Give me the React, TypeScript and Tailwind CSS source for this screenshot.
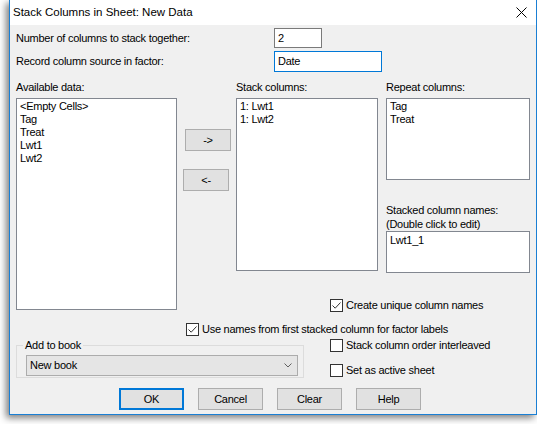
import React from 'react';

/* ── Small Win32-style building blocks ───────────────────────── */
const CheckBox: React.FC<{ checked?: boolean }> = ({ checked }) => (
  <span className="w-[13px] h-[13px] border border-[#333333] bg-white flex items-center justify-center shrink-0">
    {checked && (
      <svg width="11" height="11" viewBox="0 0 11 11">
        <path d="M1.5 5.5 L4.2 8.2 L9.5 2.5" fill="none" stroke="#333333" strokeWidth="1" />
      </svg>
    )}
  </span>
);

const CheckRow: React.FC<{ checked?: boolean; label: string; className?: string }> = ({
  checked,
  label,
  className = '',
}) => (
  <label className={`flex items-center gap-[3px] h-[13px] leading-[13px] ${className}`}>
    <CheckBox checked={checked} />
    <span>{label}</span>
  </label>
);

const Button: React.FC<{ label: string; primary?: boolean; className?: string }> = ({
  label,
  primary,
  className = '',
}) => (
  <button
    className={`h-[22px] bg-[#e1e1e1] text-black flex items-center justify-center ${
      primary ? 'border-2 border-[#0078d7]' : 'border border-[#adadad]'
    } ${className}`}
  >
    {label}
  </button>
);

const ListBox: React.FC<{ items: string[]; className?: string }> = ({ items, className = '' }) => (
  <ul className={`bg-white border border-[#828790] pt-[1px] pl-[3px] ${className}`}>
    {items.map((it) => (
      <li key={it} className="leading-[13px] whitespace-nowrap">
        {it}
      </li>
    ))}
  </ul>
);

/* ── Dialog ─────────────────────────────────────────────────── */
export default function App() {
  return (
    <div className="w-[537px] h-[424px] bg-white overflow-hidden font-['Liberation_Sans',Arial,sans-serif] text-[11px] text-black">
      <div className="ml-[9px] w-[528px] h-[415px] bg-[#f0f0f0] border-x border-b border-[#1a7fd4] flex flex-col shadow-[-3px_3px_7px_rgba(0,0,0,0.5)]">
        {/* Title bar */}
        <div className="h-[25px] bg-white flex items-center justify-between pl-[3px] pr-[9px] shrink-0">
          <span className="text-[11.5px]">Stack Columns in Sheet: New Data</span>
          <svg width="11" height="11" viewBox="0 0 11 11">
            <path d="M0.5 0.5 L10.5 10.5 M10.5 0.5 L0.5 10.5" stroke="#000" strokeWidth="1" />
          </svg>
        </div>

        {/* Body */}
        <div className="flex flex-col pl-[6px] tracking-[-0.25px]">
          <div className="flex items-center mt-[3px] h-[20px]">
            <span className="w-[258px]">Number of columns to stack together:</span>
            <div className="w-[48px] h-[20px] border border-[#7a7a7a] bg-white pl-[3px] flex items-center">2</div>
          </div>
          <div className="flex items-center mt-[3px] h-[21px]">
            <span className="w-[258px]">Record column source in factor:</span>
            <div className="w-[108px] h-[21px] border border-[#0078d7] bg-white pl-[3px] flex items-center">Date</div>
          </div>

          <div className="flex mt-[8px] h-[14px] leading-[14px]">
            <span className="w-[220px]">Available data:</span>
            <span className="w-[150px]">Stack columns:</span>
            <span>Repeat columns:</span>
          </div>

          <div className="flex mt-[4px]">
            <ListBox
              items={['<Empty Cells>', 'Tag', 'Treat', 'Lwt1', 'Lwt2']}
              className="w-[161px] h-[212px]"
            />
            <div className="flex flex-col">
              <div className="flex">
                <div className="w-[59px] flex flex-col">
                  <Button label="->" className="ml-[8px] mt-[31px] w-[46px]" />
                  <Button label="<-" className="ml-[6px] mt-[18px] w-[46px]" />
                </div>
                <ListBox items={['1: Lwt1', '1: Lwt2']} className="w-[142px] h-[173px]" />
                <div className="ml-[8px] w-[144px] flex flex-col">
                  <ListBox items={['Tag', 'Treat']} className="w-[144px] h-[82px]" />
                  <span className="mt-[23px] leading-[14px]">Stacked column names:</span>
                  <span className="leading-[14px]">(Double click to edit)</span>
                  <ListBox items={['Lwt1_1']} className="w-[144px] h-[42px] pt-[2px]" />
                </div>
              </div>
              <CheckRow checked label="Create unique column names" className="mt-[26px] ml-[153px]" />
            </div>
          </div>

          <CheckRow
            checked
            label="Use names from first stacked column for factor labels"
            className="mt-[11px] ml-[170px]"
          />

          <div className="flex mt-[2px]">
            <fieldset className="w-[288px] border border-[#dcdcdc] pb-[1px]">
              <legend className="ml-[6px] px-[2px] leading-[14px]">Add to book</legend>
              <div className="ml-[9px] mt-[3px] w-[272px] h-[21px] bg-[#e5e5e5] border border-[#acacac] flex items-center justify-between pl-[3px] pr-[5px]">
                <span>New book</span>
                <svg width="8" height="5" viewBox="0 0 8 5">
                  <path d="M0.5 0.5 L4 4 L7.5 0.5" fill="none" stroke="#606060" strokeWidth="1" />
                </svg>
              </div>
            </fieldset>
            <div className="ml-[26px] flex flex-col">
              <CheckRow label="Stack column order interleaved" className="mt-[1px]" />
              <CheckRow label="Set as active sheet" className="mt-[12px]" />
            </div>
          </div>

          <div className="flex mt-[10px] ml-[103px] gap-[14px]">
            <Button label="OK" primary className="w-[65px]" />
            <Button label="Cancel" className="w-[65px]" />
            <Button label="Clear" className="w-[65px]" />
            <Button label="Help" className="w-[65px]" />
          </div>
        </div>
      </div>
    </div>
  );
}
